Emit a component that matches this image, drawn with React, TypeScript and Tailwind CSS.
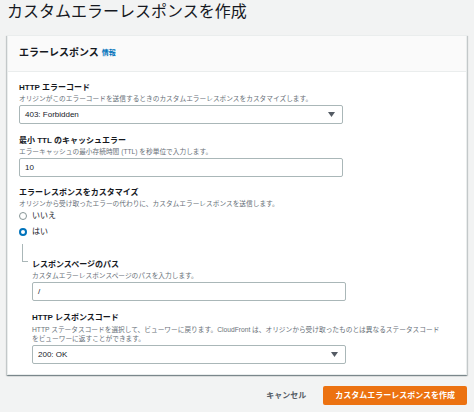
import React from "react"

const font = { fontFamily: '"Liberation Sans", "Noto Sans CJK JP", sans-serif' }

function Caret() {
  return (
    <svg width="7" height="5" viewBox="0 0 7 5" className="shrink-0">
      <path d="M0 0 H7 L3.5 5 Z" fill="#545b64" />
    </svg>
  )
}

function Field({ label, desc, children, className = "" }: { label: string; desc: React.ReactNode; children: React.ReactNode; className?: string }) {
  return (
    <div className={className}>
      <div className="text-[8px] leading-[12px] font-bold text-[#16191f]">{label}</div>
      <div className="text-[6.7px] leading-[10px] text-[#687078]">{desc}</div>
      {children}
    </div>
  )
}

function SelectBox({ value, width }: { value: string; width: string }) {
  return (
    <div className={`mt-[1px] h-[19px] ${width} flex items-center justify-between border border-[#aab7b8] rounded-[2px] bg-white pl-[5px] pr-[7px]`}>
      <span className="text-[8px] text-[#16191f]">{value}</span>
      <Caret />
    </div>
  )
}

function TextBox({ value, width }: { value: string; width: string }) {
  return (
    <div className={`mt-[1px] h-[19px] ${width} flex items-center border border-[#aab7b8] rounded-[2px] bg-white pl-[5px]`}>
      <span className="text-[8px] text-[#16191f]">{value}</span>
    </div>
  )
}

function Radio({ checked, label }: { checked: boolean; label: string }) {
  return (
    <div className="flex items-center h-[14px] gap-[5px]">
      {checked ? (
        <span className="w-[8px] h-[8px] rounded-full border-[2.5px] border-[#0073bb] bg-white" />
      ) : (
        <span className="w-[8px] h-[8px] rounded-full border border-[#879596] bg-white" />
      )}
      <span className="text-[8px] text-[#16191f]">{label}</span>
    </div>
  )
}

export default function App() {
  return (
    <div className="w-[474px] h-[412px] bg-[#f2f3f3] overflow-hidden" style={font}>
      <h1 className="pl-[7px] text-[16px] leading-[24px] text-[#16191f]">カスタムエラーレスポンスを作成</h1>

      <div className="mx-[7px] mt-[11px] bg-white border border-[#eaeded] shadow-[0_1px_1px_0_rgba(0,28,36,0.3),1px_1px_1px_0_rgba(0,28,36,0.15),-1px_1px_1px_0_rgba(0,28,36,0.15)]">
        <div className="h-[36px] bg-[#fafafa] border-b border-[#eaeded] flex items-center pl-[11px] pb-[3px]">
          <span className="text-[10px] font-bold text-[#16191f]">エラーレスポンス</span>
          <span className="ml-[3px] mt-[2px] text-[7px] font-bold text-[#0073bb]">情報</span>
        </div>

        <div className="pl-[11px] pr-[11px] pt-[10px] pb-[10px]">
          <Field label="HTTP エラーコード" desc="オリジンがこのエラーコードを送信するときのカスタムエラーレスポンスをカスタマイズします。">
            <SelectBox value="403: Forbidden" width="w-[324px]" />
          </Field>

          <Field className="mt-[11px]" label="最小 TTL のキャッシュエラー" desc="エラーキャッシュの最小存続時間 (TTL) を秒単位で入力します。">
            <TextBox value="10" width="w-[324px]" />
          </Field>

          <Field className="mt-[10px]" label="エラーレスポンスをカスタマイズ" desc="オリジンから受け取ったエラーの代わりに、カスタムエラーレスポンスを送信します。">
            <Radio checked={false} label="いいえ" />
            <div className="mt-[2px]">
              <Radio checked={true} label="はい" />
            </div>
          </Field>

          <div className="mt-[5px] flex">
            <div className="ml-[3px] w-[6px] h-[18px] border-l border-b border-[#aab7b8] shrink-0" />
            <div className="ml-[4px] pt-[15px] w-[414px]">
              <Field label="レスポンスページのパス" desc="カスタムエラーレスポンスページのパスを入力します。">
                <TextBox value="/" width="w-[314px]" />
              </Field>

              <Field className="mt-[11px]" label="HTTP レスポンスコード" desc={
                <span className="block leading-[9px] pt-[1px]">
                  HTTP ステータスコードを選択して、ビューワーに戻ります。CloudFront は、オリジンから受け取ったものとは異なるステータスコードをビューワーに返すことができます。
                </span>
              }>
                <div className="mt-[2px]">
                  <SelectBox value="200: OK" width="w-[314px]" />
                </div>
              </Field>
            </div>
          </div>
        </div>
      </div>

      <div className="mt-[11px] mr-[7px] flex items-center justify-end gap-[17px]">
        <button className="text-[8px] font-bold text-[#545b64]">キャンセル</button>
        <button className="h-[19px] px-[12px] bg-[#ec7211] rounded-[2px] text-[8px] font-bold text-white">
          カスタムエラーレスポンスを作成
        </button>
      </div>
    </div>
  )
}
